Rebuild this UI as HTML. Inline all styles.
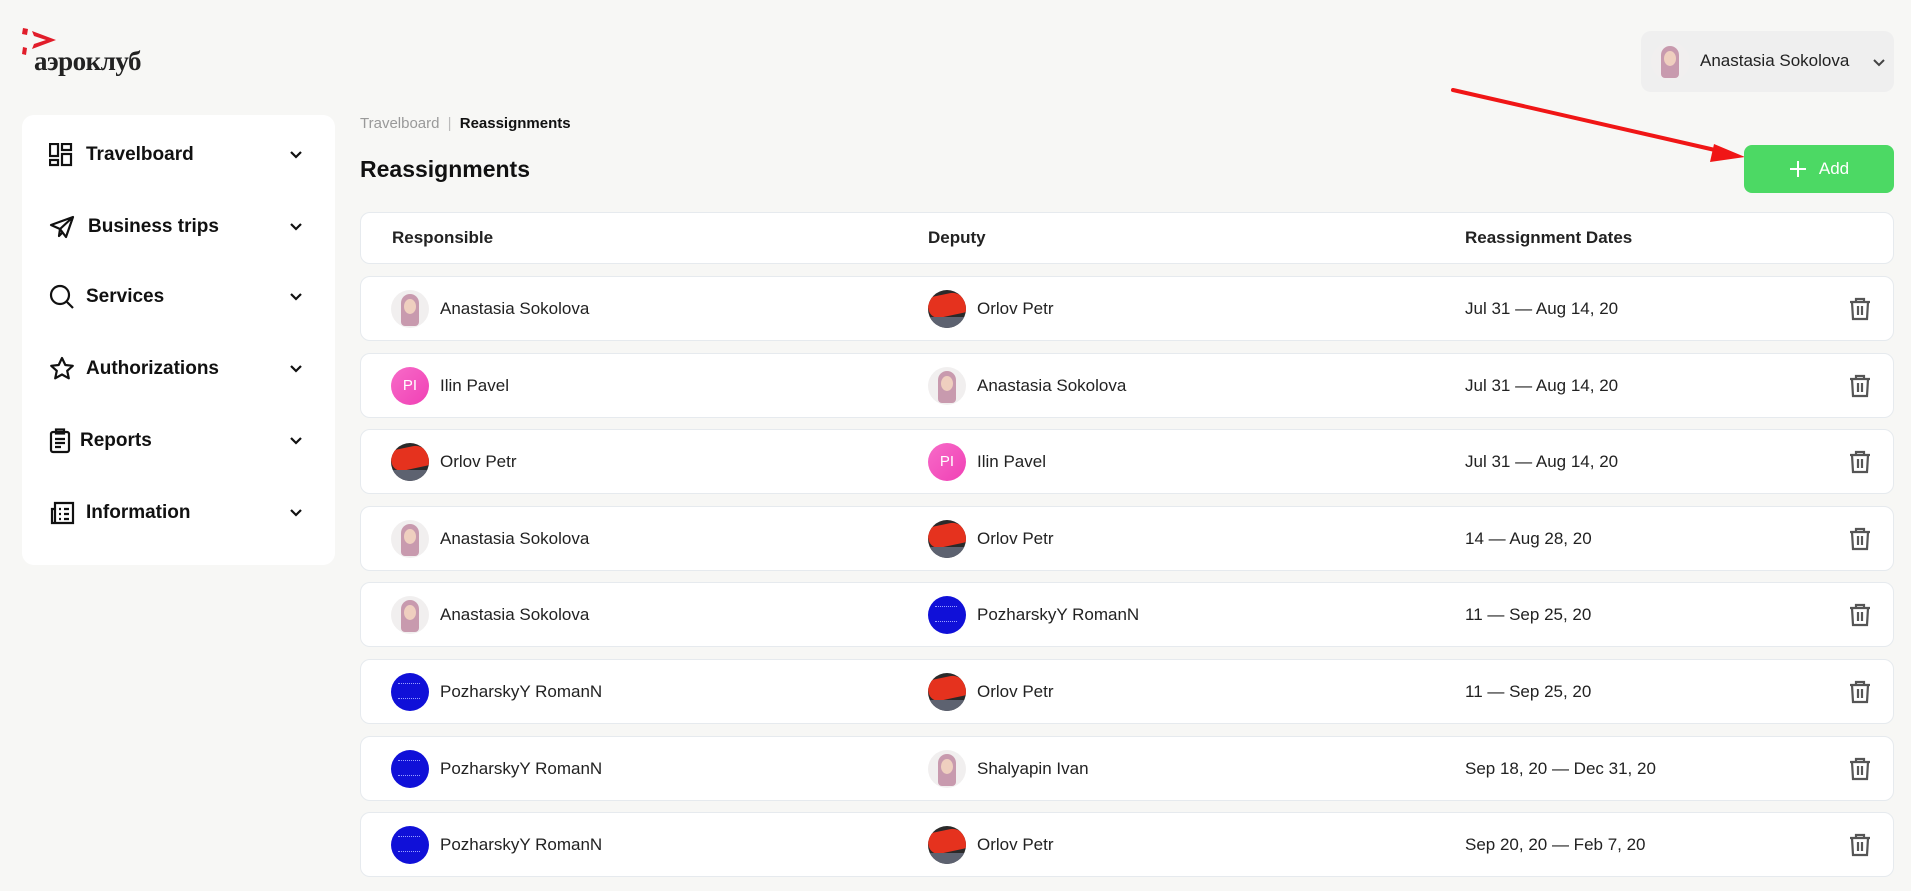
<!DOCTYPE html>
<html><head><meta charset="utf-8"><style>
*{box-sizing:border-box;margin:0;padding:0}
body{width:1911px;height:891px;background:#f7f7f5;font-family:"Liberation Sans",sans-serif;color:#111;position:relative;overflow:hidden}
.abs{position:absolute}
.side{left:22px;top:115px;width:313px;height:450px;background:#fff;border-radius:12px}
.item{position:absolute;left:0;width:313px;height:30px;display:flex;align-items:center;font-weight:bold;font-size:19px}
.item svg.ic{position:absolute;left:27px}
.item span{position:absolute;left:64px}
.item svg.ch{position:absolute;left:267px}
.card{position:absolute;left:360px;width:1534px;background:#fff;border:1px solid #e6eaee;border-radius:10px}
.row{height:65px}
.cell{position:absolute;top:0;height:100%;display:flex;align-items:center;font-size:17px;color:#222}
.av{width:38px;height:38px;border-radius:50%;margin-right:11px;flex:none;overflow:hidden;position:relative}
.pi{background:linear-gradient(135deg,#f76bc8,#f040b5);color:#fff;font-size:15px;display:flex;align-items:center;justify-content:center}
.an{background:#f1efef}
.an::before{content:"";position:absolute;left:10px;top:4px;width:18px;height:32px;border-radius:9px 9px 4px 4px;background:#c89aae}
.an::after{content:"";position:absolute;left:13px;top:9px;width:12px;height:15px;border-radius:50%;background:#efcfbf}
.or{background:#2a2a2a}
.or::before{content:"";position:absolute;left:0;top:4px;width:38px;height:22px;border-radius:8px 14px 4px 10px;background:#e5321e;transform:rotate(-12deg)}
.or::after{content:"";position:absolute;left:0;top:27px;width:38px;height:11px;background:#5d6270}
.po{background:#1010d8}
.po::before{content:"";position:absolute;left:7px;top:10px;width:22px;height:14px;border-top:1px dotted #9aa0ff;border-bottom:1px dotted #9aa0ff}
.tr{position:absolute;left:1488px;top:50%;margin-top:-12px}
</style></head><body>

<!-- logo -->
<svg class="abs" style="left:20px;top:26px" width="40" height="36" viewBox="0 0 40 36">
<polygon points="3,2 8,3 7,9 2,8" fill="#e11d2a"/>
<polygon points="12,5 36,14 12,23 14,18 26,14 14,10" fill="#e11d2a"/>
<polygon points="3,21 7,22 6,29 2,28" fill="#e11d2a"/>
</svg>
<div class="abs" style="left:34px;top:46px;font-family:'Liberation Serif',serif;font-size:27px;font-weight:bold;color:#222;letter-spacing:-0.5px">аэроклуб</div>

<div class="abs side">
 <div class="item" style="top:25px"><svg class="ic" width="24" height="24" viewBox="0 0 24 24" fill="none" stroke="#111" stroke-width="2.2"><rect x="1" y="1" width="8" height="12"/><rect x="13" y="1" width="9" height="6"/><rect x="1" y="17" width="8" height="5"/><rect x="13" y="11" width="9" height="11"/></svg><span>Travelboard</span><svg class="ch" width="14" height="10" viewBox="0 0 14 10"><path d="M2 2l5 5 5-5" fill="none" stroke="#111" stroke-width="2.2"/></svg></div>
 <div class="item" style="top:97px"><svg class="ic" width="26" height="24" viewBox="0 0 26 24" fill="none" stroke="#111" stroke-width="2.2" stroke-linejoin="round"><path d="M2 10L24 2 17 22 11 14Z M11 14L24 2"/><path d="M11 14l-1 7 4-4"/></svg><span style="left:66px">Business trips</span><svg class="ch" width="14" height="10" viewBox="0 0 14 10"><path d="M2 2l5 5 5-5" fill="none" stroke="#111" stroke-width="2.2"/></svg></div>
 <div class="item" style="top:167px"><svg class="ic" width="26" height="26" viewBox="0 0 26 26" fill="none" stroke="#111" stroke-width="2.2"><circle cx="11" cy="11" r="9"/><path d="M18 18l6 6"/></svg><span>Services</span><svg class="ch" width="14" height="10" viewBox="0 0 14 10"><path d="M2 2l5 5 5-5" fill="none" stroke="#111" stroke-width="2.2"/></svg></div>
 <div class="item" style="top:239px"><svg class="ic" width="26" height="26" viewBox="0 0 26 26" fill="none" stroke="#111" stroke-width="2.2" stroke-linejoin="round"><path d="M13 2l3.3 7 7.5.8-5.6 5 1.6 7.5L13 18.5 6.2 22.3l1.6-7.5-5.6-5 7.5-.8Z"/></svg><span>Authorizations</span><svg class="ch" width="14" height="10" viewBox="0 0 14 10"><path d="M2 2l5 5 5-5" fill="none" stroke="#111" stroke-width="2.2"/></svg></div>
 <div class="item" style="top:311px"><svg class="ic" width="22" height="26" viewBox="0 0 22 26" fill="none" stroke="#111" stroke-width="2.2"><rect x="2" y="4" width="18" height="20" rx="2"/><rect x="7" y="1.5" width="8" height="4"/><path d="M6 11h10M6 15h10M6 19h6"/></svg><span style="left:58px">Reports</span><svg class="ch" width="14" height="10" viewBox="0 0 14 10"><path d="M2 2l5 5 5-5" fill="none" stroke="#111" stroke-width="2.2"/></svg></div>
 <div class="item" style="top:383px"><svg class="ic" width="26" height="24" viewBox="0 0 26 24" fill="none" stroke="#111" stroke-width="2.2"><path d="M6 2h18v20H3V8h3z M6 8v14"/><path d="M10 8h2M15 8h5M10 13h2M15 13h5M10 18h2M15 18h5"/></svg><span>Information</span><svg class="ch" width="14" height="10" viewBox="0 0 14 10"><path d="M2 2l5 5 5-5" fill="none" stroke="#111" stroke-width="2.2"/></svg></div>
</div>

<div class="abs" style="left:360px;top:115px;font-size:15px;color:#999">Travelboard <span style="color:#bbb;margin:0 4px">|</span> <b style="color:#111">Reassignments</b></div>
<div class="abs" style="left:360px;top:156px;font-size:23px;font-weight:bold">Reassignments</div>

<!-- user pill -->
<div class="abs" style="left:1641px;top:31px;width:253px;height:61px;background:#efefef;border-radius:10px">
 <div class="av an" style="position:absolute;left:10px;top:11px;width:39px;height:39px"></div>
 <div style="position:absolute;left:59px;top:20px;font-size:17px;color:#222">Anastasia Sokolova</div>
 <svg style="position:absolute;left:231px;top:27px" width="14" height="10" viewBox="0 0 14 10"><path d="M2 2l5 5 5-5" fill="none" stroke="#444" stroke-width="2"/></svg>
</div>

<!-- arrow -->
<svg class="abs" style="left:0;top:0" width="1911" height="200"><line x1="1453" y1="90" x2="1715" y2="150" stroke="#f01616" stroke-width="4" stroke-linecap="round"/><polygon points="1745,157 1710,162 1714,144" fill="#f01616"/></svg>

<div class="abs" style="left:1744px;top:145px;width:150px;height:48px;background:#4cd964;border-radius:8px;color:#fff;font-size:17px;display:flex;align-items:center;justify-content:center"><svg width="18" height="18" viewBox="0 0 18 18" style="margin-right:12px"><path d="M9 1v16M1 9h16" stroke="#fff" stroke-width="2"/></svg>Add</div>

<div class="card" style="top:212px;height:52px">
 <div class="cell" style="left:31px;font-weight:bold">Responsible</div>
 <div class="cell" style="left:567px;font-weight:bold">Deputy</div>
 <div class="cell" style="left:1104px;font-weight:bold">Reassignment Dates</div>
</div>

<div class="card row" style="top:276px"><div class="cell" style="left:30px"><div class="av an"></div>Anastasia Sokolova</div><div class="cell" style="left:567px"><div class="av or"></div>Orlov Petr</div><div class="cell" style="left:1104px">Jul 31 — Aug 14, 20</div><svg class="tr" width="22" height="24" viewBox="0 0 22 24" fill="none" stroke="#555" stroke-width="2.2"><path d="M1 5h20M7 5V2h8v3M3 5l1 17h14l1-17M9 9v9M13 9v9"/></svg></div>
<div class="card row" style="top:353px"><div class="cell" style="left:30px"><div class="av pi">PI</div>Ilin Pavel</div><div class="cell" style="left:567px"><div class="av an"></div>Anastasia Sokolova</div><div class="cell" style="left:1104px">Jul 31 — Aug 14, 20</div><svg class="tr" width="22" height="24" viewBox="0 0 22 24" fill="none" stroke="#555" stroke-width="2.2"><path d="M1 5h20M7 5V2h8v3M3 5l1 17h14l1-17M9 9v9M13 9v9"/></svg></div>
<div class="card row" style="top:429px"><div class="cell" style="left:30px"><div class="av or"></div>Orlov Petr</div><div class="cell" style="left:567px"><div class="av pi">PI</div>Ilin Pavel</div><div class="cell" style="left:1104px">Jul 31 — Aug 14, 20</div><svg class="tr" width="22" height="24" viewBox="0 0 22 24" fill="none" stroke="#555" stroke-width="2.2"><path d="M1 5h20M7 5V2h8v3M3 5l1 17h14l1-17M9 9v9M13 9v9"/></svg></div>
<div class="card row" style="top:506px"><div class="cell" style="left:30px"><div class="av an"></div>Anastasia Sokolova</div><div class="cell" style="left:567px"><div class="av or"></div>Orlov Petr</div><div class="cell" style="left:1104px">14 — Aug 28, 20</div><svg class="tr" width="22" height="24" viewBox="0 0 22 24" fill="none" stroke="#555" stroke-width="2.2"><path d="M1 5h20M7 5V2h8v3M3 5l1 17h14l1-17M9 9v9M13 9v9"/></svg></div>
<div class="card row" style="top:582px"><div class="cell" style="left:30px"><div class="av an"></div>Anastasia Sokolova</div><div class="cell" style="left:567px"><div class="av po"></div>PozharskyY RomanN</div><div class="cell" style="left:1104px">11 — Sep 25, 20</div><svg class="tr" width="22" height="24" viewBox="0 0 22 24" fill="none" stroke="#555" stroke-width="2.2"><path d="M1 5h20M7 5V2h8v3M3 5l1 17h14l1-17M9 9v9M13 9v9"/></svg></div>
<div class="card row" style="top:659px"><div class="cell" style="left:30px"><div class="av po"></div>PozharskyY RomanN</div><div class="cell" style="left:567px"><div class="av or"></div>Orlov Petr</div><div class="cell" style="left:1104px">11 — Sep 25, 20</div><svg class="tr" width="22" height="24" viewBox="0 0 22 24" fill="none" stroke="#555" stroke-width="2.2"><path d="M1 5h20M7 5V2h8v3M3 5l1 17h14l1-17M9 9v9M13 9v9"/></svg></div>
<div class="card row" style="top:736px"><div class="cell" style="left:30px"><div class="av po"></div>PozharskyY RomanN</div><div class="cell" style="left:567px"><div class="av an"></div>Shalyapin Ivan</div><div class="cell" style="left:1104px">Sep 18, 20 — Dec 31, 20</div><svg class="tr" width="22" height="24" viewBox="0 0 22 24" fill="none" stroke="#555" stroke-width="2.2"><path d="M1 5h20M7 5V2h8v3M3 5l1 17h14l1-17M9 9v9M13 9v9"/></svg></div>
<div class="card row" style="top:812px"><div class="cell" style="left:30px"><div class="av po"></div>PozharskyY RomanN</div><div class="cell" style="left:567px"><div class="av or"></div>Orlov Petr</div><div class="cell" style="left:1104px">Sep 20, 20 — Feb 7, 20</div><svg class="tr" width="22" height="24" viewBox="0 0 22 24" fill="none" stroke="#555" stroke-width="2.2"><path d="M1 5h20M7 5V2h8v3M3 5l1 17h14l1-17M9 9v9M13 9v9"/></svg></div>

</body></html>
